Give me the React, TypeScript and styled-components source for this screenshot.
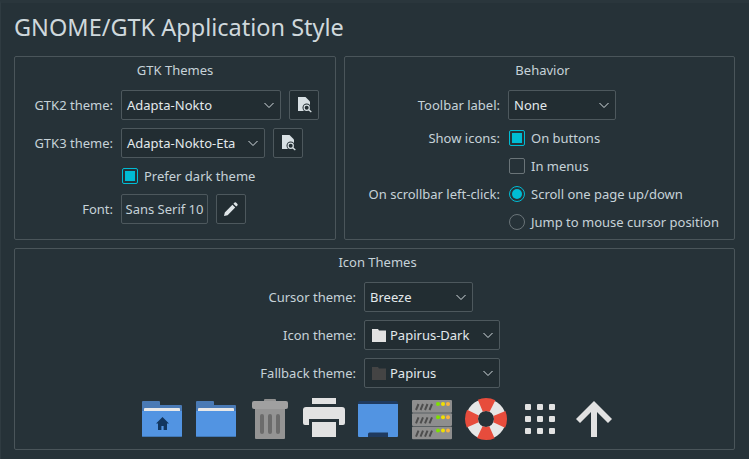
import { ReactNode } from "react";
import styled, { createGlobalStyle } from "styled-components";

const GlobalStyle = createGlobalStyle`
  html, body {
    margin: 0;
    padding: 0;
    background: #263238;
  }
  * {
    box-sizing: border-box;
  }
`;

const Page = styled.div`
  width: 749px;
  height: 459px;
  overflow: hidden;
  background: #263238;
  border-top: 3px solid #2a363c;
  border-left: 1px solid #2f3b41;
  padding: 0 14px 0 13px;
  color: #c6d2d8;
  font-family: "Noto Sans", sans-serif;
  font-size: 13px;
`;

const Title = styled.h1`
  margin: 0;
  height: 53px;
  padding-top: 8px;
  font-size: 23.5px;
  line-height: 32px;
  font-weight: 400;
  color: #cfd8dc;
`;

const TopRow = styled.div`
  display: grid;
  grid-template-columns: 322px 391px;
  gap: 8px;
  margin-bottom: 8px;
`;

const Group = styled.section<{ $height: number }>`
  height: ${(p) => p.$height}px;
  border: 1px solid #4a555a;
  border-radius: 2px;
  display: flex;
  flex-direction: column;
  align-items: center;
  padding: 4px 0 0;
`;

const GroupTitle = styled.div<{ $inset?: number }>`
  height: 18px;
  line-height: 18px;
  text-align: center;
  padding-left: ${(p) => p.$inset ?? 0}px;
`;

const Form = styled.div<{ $label: number }>`
  align-self: stretch;
  margin-top: 11px;
  display: grid;
  grid-template-columns: ${(p) => p.$label}px 1fr;
  column-gap: 8px;
  row-gap: 8px;
  align-items: center;
`;

const Label = styled.div`
  text-align: right;
  white-space: nowrap;
`;

const Field = styled.div<{ $gap?: number }>`
  display: flex;
  align-items: center;
  gap: ${(p) => p.$gap ?? 6}px;
  min-height: 20px;
  white-space: nowrap;
`;

const SelectBox = styled.div<{ $width: number }>`
  width: ${(p) => p.$width}px;
  height: 30px;
  border: 1px solid #4d585d;
  border-radius: 2px;
  background: #222d32;
  color: #e3e9ec;
  display: flex;
  align-items: center;
  padding: 0 5px 0 5px;
  gap: 4px;
`;

const SelectText = styled.span`
  flex: 1;
`;

const SquareButton = styled.div`
  width: 30px;
  height: 30px;
  border: 1px solid #4d585d;
  border-radius: 2px;
  background: #222d32;
  display: flex;
  align-items: center;
  justify-content: center;
`;

const FontBox = styled.div`
  width: 87px;
  height: 30px;
  border: 1px solid #4d585d;
  border-radius: 2px;
  background: #263238;
  display: flex;
  align-items: center;
  justify-content: center;
  white-space: nowrap;
`;

const Check = styled.div<{ $on?: boolean; $round?: boolean }>`
  width: 16px;
  height: 16px;
  margin-left: 1px;
  flex: none;
  border: 1px solid ${(p) => (p.$on ? "#00bcd4" : "#6a7478")};
  border-radius: ${(p) => (p.$round ? "50%" : "2px")};
  display: flex;
  align-items: center;
  justify-content: center;
  &::after {
    content: "";
    display: ${(p) => (p.$on ? "block" : "none")};
    width: 10px;
    height: 10px;
    background: #00bcd4;
    border-radius: ${(p) => (p.$round ? "50%" : "0")};
  }
`;

const IconRow = styled.div`
  display: flex;
  justify-content: center;
  gap: 6px;
  padding-left: 7px;
  margin-top: 7px;
`;

const Slot = styled.div`
  width: 48px;
  height: 48px;
  flex: none;
`;

const ChevronWrap = styled.svg`
  flex: none;
`;

const FolderGlyph = styled.svg`
  flex: none;
  margin-left: 2px;
`;

const Chevron = () => (
  <ChevronWrap width="12" height="12" viewBox="0 0 12 12" fill="none">
    <path d="M1.5 4l4.5 4.5L10.5 4" stroke="#d5dde1" strokeWidth="1" />
  </ChevronWrap>
);

const ThemeSelect = ({ width, text, icon }: { width: number; text: string; icon?: ReactNode }) => (
  <SelectBox $width={width}>
    {icon}
    <SelectText>{text}</SelectText>
    <Chevron />
  </SelectBox>
);

const PreviewIcon = () => (
  <svg width="16" height="16" viewBox="0 0 16 16">
    <path d="M2 0h7.5L14 4.5V14H2z" fill="#d8e0e4" />
    <circle cx="10.7" cy="10.7" r="4.2" fill="#222d32" />
    <circle cx="10.7" cy="10.7" r="2.6" fill="none" stroke="#d8e0e4" strokeWidth="1.2" />
    <path d="M12.7 12.7l2.6 2.3" stroke="#d8e0e4" strokeWidth="1.3" />
  </svg>
);

const PencilIcon = () => (
  <svg width="16" height="16" viewBox="0 0 16 16">
    <path d="M1 15l.8-3.6 7.6-7.6 2.8 2.8-7.6 7.6zM10.4 2.8l1.2-1.2a1 1 0 0 1 1.4 0l1.4 1.4a1 1 0 0 1 0 1.4l-1.2 1.2z" fill="#dfe5e8" />
  </svg>
);

const SmallFolder = ({ color }: { color: string }) => (
  <FolderGlyph width="14" height="13" viewBox="0 0 14 13">
    <path d="M0 0h6l1 1.5h7V13H0z" fill={color} />
  </FolderGlyph>
);

const FolderIcon = ({ home }: { home?: boolean }) => (
  <svg width="48" height="48" viewBox="0 0 48 48">
    <path d="M4 7a1 1 0 0 1 1-1h16a1 1 0 0 1 1 1v3h21a1 1 0 0 1 1 1v6H4z" fill="#4a7ab5" />
    <path d="M6 14a1 1 0 0 1 1-1h34a1 1 0 0 1 1 1v3H6z" fill="#e8e8e8" />
    <path d="M4 16h40v25a1 1 0 0 1-1 1H5a1 1 0 0 1-1-1z" fill="#5294e2" />
    <path d="M4 41.3a.8.8 0 0 0 .8.7h38.4a.8.8 0 0 0 .8-.7z" fill="#3d6fa8" />
    {home && <path d="M24.5 22L18 28.5h2V35h3.4v-4h2.2v4H29v-6.500h2z" fill="#12365f" />}
  </svg>
);

const TrashIcon = () => (
  <svg width="48" height="48" viewBox="0 0 48 48">
    <rect x="18" y="4" width="12" height="4" rx="1" fill="#909090" />
    <rect x="6" y="6" width="36" height="8" rx="2" fill="#a0a0a0" />
    <path d="M9 14h30v29a1 1 0 0 1-1 1H10a1 1 0 0 1-1-1z" fill="#949494" />
    <rect x="14" y="19" width="4" height="20" rx="2" fill="#6c6c6c" />
    <rect x="22" y="19" width="4" height="20" rx="2" fill="#6c6c6c" />
    <rect x="30" y="19" width="4" height="20" rx="2" fill="#6c6c6c" />
  </svg>
);

const PrinterIcon = () => (
  <svg width="48" height="48" viewBox="0 0 48 48" fill="#e2e2e2">
    <rect x="12" y="3" width="24" height="6" />
    <path d="M6 12h36a3 3 0 0 1 3 3v13a2 2 0 0 1-2 2h-4v-6H9v6H5a2 2 0 0 1-2-2V15a3 3 0 0 1 3-3z" />
    <rect x="12" y="27" width="24" height="15" />
  </svg>
);

const WindowIcon = () => (
  <svg width="48" height="48" viewBox="0 0 48 48">
    <path d="M4 8a2 2 0 0 1 2-2h36a2 2 0 0 1 2 2v2H4z" fill="#1f3a5f" />
    <path d="M4 9h40v32a1 1 0 0 1-1 1H5a1 1 0 0 1-1-1z" fill="#5294e2" />
    <path d="M14 42v-3a1.500 1.500 0 0 1 1.500-1.500H34V42z" fill="#1f3a5f" />
  </svg>
);

const ServerUnit = ({ y }: { y: number }) => (
  <g transform={`translate(0 ${y})`}>
    <rect x="4" y="0" width="40" height="12.7" rx="1" fill="#8e8e8e" />
    <path d="M8 10l2.500-6M12.500 10l2.500-6M17 10l2.500-6M21.500 10l2.500-6" stroke="#4d4d4d" strokeWidth="2" />
    <circle cx="30" cy="4" r="2" fill="#7ee000" />
    <circle cx="35" cy="4" r="2" fill="#f0e000" />
    <circle cx="40" cy="4" r="2" fill="#fbb440" />
  </g>
);

const ServerIcon = () => (
  <svg width="48" height="48" viewBox="0 0 48 48">
    <ServerUnit y={5} />
    <ServerUnit y={18.3} />
    <ServerUnit y={31.600} />
  </svg>
);

const LifebuoyIcon = () => (
  <svg width="48" height="48" viewBox="0 0 48 48">
    <circle cx="24" cy="24" r="14" fill="none" stroke="#e6e6e6" strokeWidth="12" />
    <circle cx="24" cy="24" r="14.5" fill="none" stroke="#e74c3c" strokeWidth="13" strokeDasharray="12.5 10.28" strokeDashoffset="6.25" />
  </svg>
);

const GridIcon = () => (
  <svg width="48" height="48" viewBox="0 0 48 48" fill="#e2e2e2">
    {[9, 21, 33].map((y) =>
      [9, 21, 33].map((x) => <rect key={`${x}-${y}`} x={x} y={y} width="6" height="6" rx="1" />)
    )}
  </svg>
);

const ArrowIcon = () => (
  <svg width="48" height="48" viewBox="0 0 48 48">
    <path d="M24 6l18 18-4 4-11-11v25h-6V17L10 28l-4-4z" fill="#e2e2e2" />
  </svg>
);

const App = () => {
  return (
    <Page>
      <GlobalStyle />
      <Title>GNOME/GTK Application Style</Title>
      <TopRow>
        <Group $height={184}>
          <GroupTitle>GTK Themes</GroupTitle>
          <Form $label={98}>
            <Label>GTK2 theme:</Label>
            <Field $gap={8}>
              <ThemeSelect width={160} text="Adapta-Nokto" />
              <SquareButton><PreviewIcon /></SquareButton>
            </Field>
            <Label>GTK3 theme:</Label>
            <Field $gap={8}>
              <ThemeSelect width={144} text="Adapta-Nokto-Eta" />
              <SquareButton><PreviewIcon /></SquareButton>
            </Field>
            <span />
            <Field>
              <Check $on />
              Prefer dark theme
            </Field>
            <Label>Font:</Label>
            <Field $gap={8}>
              <FontBox>Sans Serif 10</FontBox>
              <SquareButton><PencilIcon /></SquareButton>
            </Field>
          </Form>
        </Group>
        <Group $height={184}>
          <GroupTitle $inset={6}>Behavior</GroupTitle>
          <Form $label={155}>
            <Label>Toolbar label:</Label>
            <Field>
              <ThemeSelect width={108} text="None" />
            </Field>
            <Label>Show icons:</Label>
            <Field><Check $on />On buttons</Field>
            <span />
            <Field><Check />In menus</Field>
            <Label>On scrollbar left-click:</Label>
            <Field><Check $on $round />Scroll one page up/down</Field>
            <span />
            <Field><Check $round />Jump to mouse cursor position</Field>
          </Form>
        </Group>
      </TopRow>
      <Group $height={202}>
        <GroupTitle $inset={6}>Icon Themes</GroupTitle>
        <Form $label={341}>
          <Label>Cursor theme:</Label>
          <Field><ThemeSelect width={109} text="Breeze" /></Field>
          <Label>Icon theme:</Label>
          <Field><ThemeSelect width={136} text="Papirus-Dark" icon={<SmallFolder color="#e2e2e2" />} /></Field>
          <Label>Fallback theme:</Label>
          <Field><ThemeSelect width={136} text="Papirus" icon={<SmallFolder color="#444" />} /></Field>
        </Form>
        <IconRow>
          <Slot><FolderIcon home /></Slot>
          <Slot><FolderIcon /></Slot>
          <Slot><TrashIcon /></Slot>
          <Slot><PrinterIcon /></Slot>
          <Slot><WindowIcon /></Slot>
          <Slot><ServerIcon /></Slot>
          <Slot><LifebuoyIcon /></Slot>
          <Slot><GridIcon /></Slot>
          <Slot><ArrowIcon /></Slot>
        </IconRow>
      </Group>
    </Page>
  );
};

export default App;
